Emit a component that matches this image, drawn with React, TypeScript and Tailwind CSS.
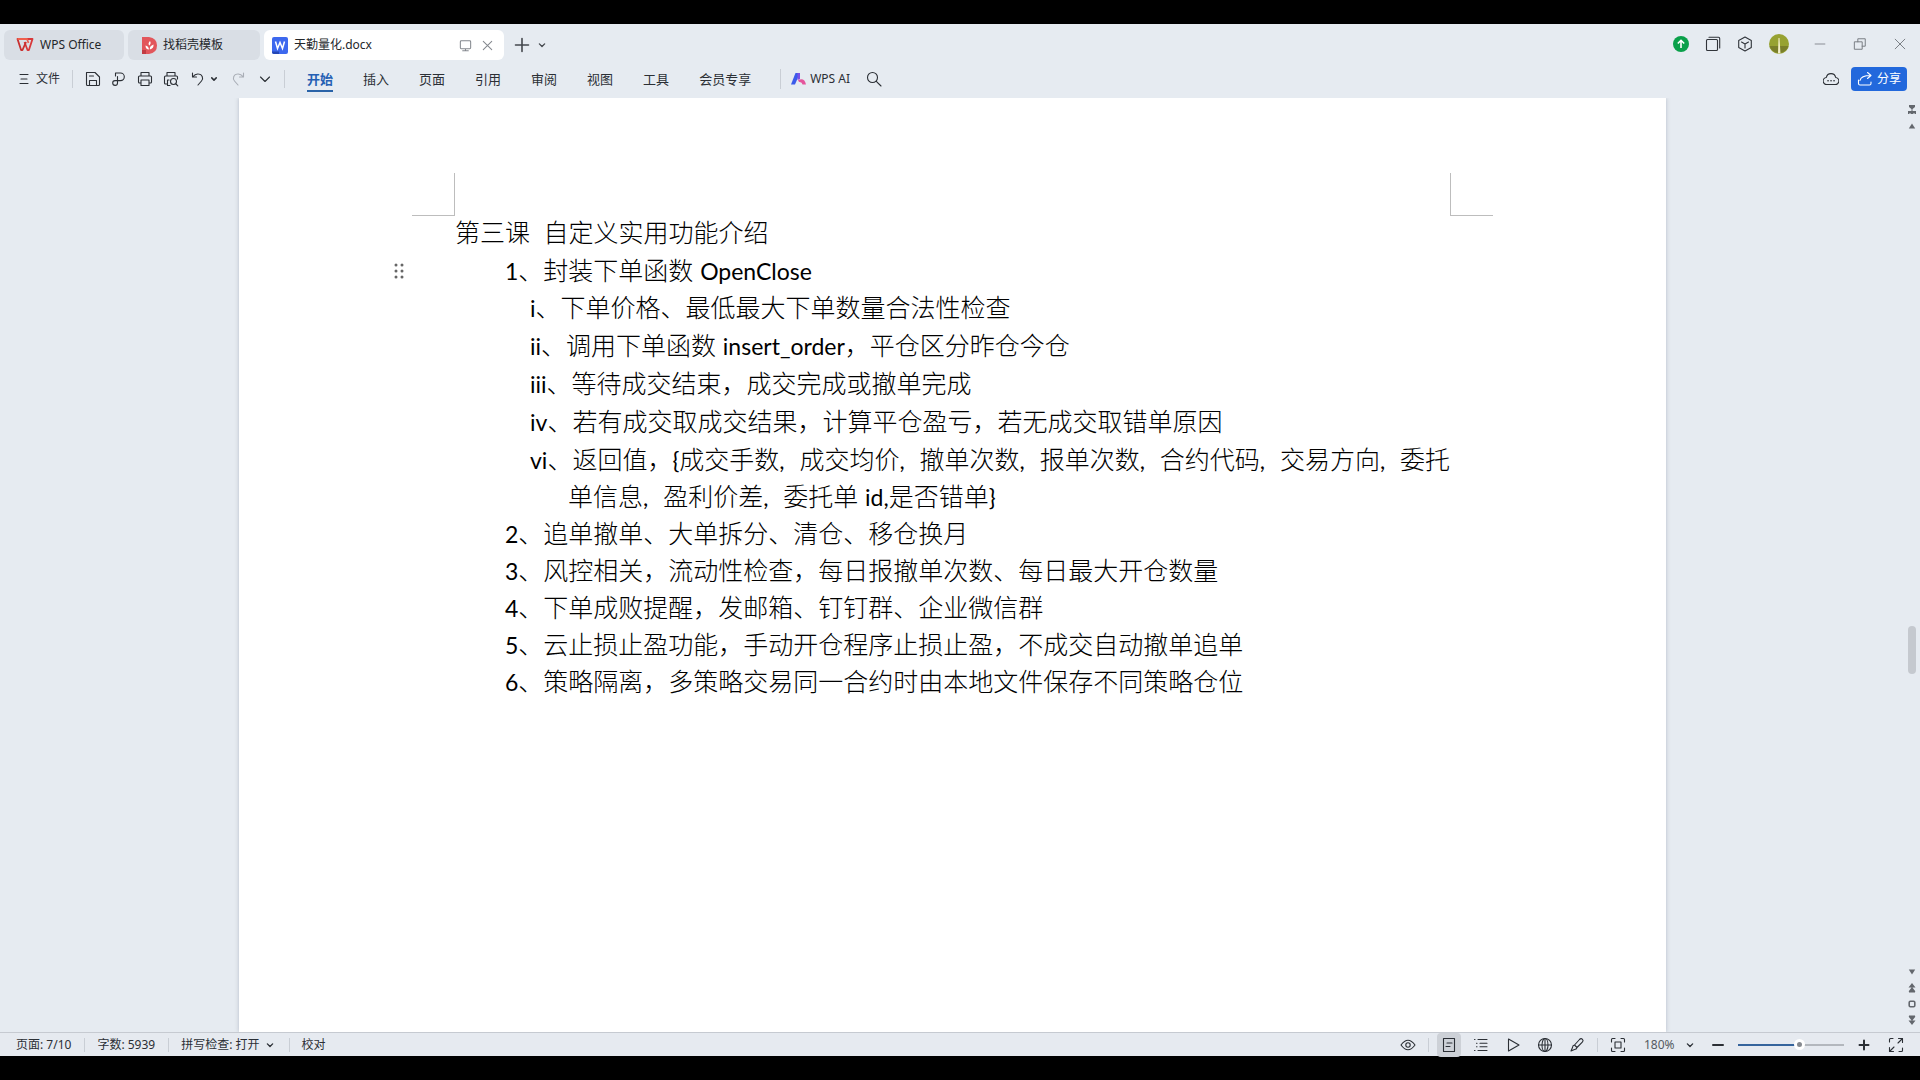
import { useState, type ReactNode } from 'react'

const menus = ['开始', '插入', '页面', '引用', '审阅', '视图', '工具', '会员专享']

function Icon({ children, className = 'size-4', strokeWidth = 1.1 }: { children: ReactNode; className?: string; strokeWidth?: number }) {
  return (
    <svg
      viewBox="0 0 16 16"
      className={`shrink-0 ${className}`}
      fill="none"
      stroke="currentColor"
      strokeWidth={strokeWidth}
      strokeLinecap="round"
      strokeLinejoin="round"
      aria-hidden="true"
    >
      {children}
    </svg>
  )
}

function Tool({ label, children, className = 'w-[26px]' }: { label: string; children: ReactNode; className?: string }) {
  return (
    <button type="button" aria-label={label} className={`flex h-6 shrink-0 items-center justify-center ${className}`}>
      {children}
    </button>
  )
}

function Divider({ className = '' }: { className?: string }) {
  return <span className={`w-px shrink-0 bg-[#c9ced5] ${className}`} />
}

function TitleBar() {
  return (
    <header className="flex h-9 items-end justify-between pl-1">
      <nav className="flex items-center gap-1 text-xs text-[#24272b]">
        <button type="button" className="flex h-[30px] w-[120px] items-center gap-1.5 rounded-md bg-[#d9dee5] pl-3">
          <svg viewBox="0 0 18 16" className="h-4 w-[18px]" fill="none" strokeWidth="1.8" strokeLinejoin="round">
            <path d="M8.5 2h8l-3.6 11h-1.4L8.500 5" stroke="#d8383a" />
            <path d="M11 2H1.500l3.600 11h1.400L10 5" stroke="#c9302f" />
            <path d="M1.500 2H11l1.500 4" stroke="#ee5f4e" />
          </svg>
          WPS Office
        </button>
        <button type="button" className="flex h-[30px] w-[132px] items-center gap-1.5 rounded-md bg-[#d9dee5] pl-3.5">
          <svg viewBox="0 0 15 17" className="h-[17px] w-[15px]">
            <path d="M0 0h7q8 1 8 8.500T7 17H0z" fill="#e2565b" />
            <path d="M0 13h4v4H0z" fill="#c23b42" />
            <path d="M3.500 8.500q3 .5 3.500 4-3.500 0-3.500-4M7.800 12.500Q7.300 9 11.500 7.500q.5 4-3.700 5M7.300 8.500Q5.500 6.500 8 4q1.500 2.500-.7 4.500" fill="#fff" />
          </svg>
          找稻壳模板
        </button>
        <div className="flex h-[30px] w-[240px] items-center rounded-md bg-white pr-1.5 pl-2">
          <svg viewBox="0 0 16 17" className="h-[17px] w-4">
            <rect width="16" height="17" rx="2" fill="#3d68ee" />
            <path d="M0 14.500h7V17H2q-2 0-2-2z" fill="#2447b5" />
            <path d="M3.500 4.500l2 7L8 5.500l2.500 6 2-7" fill="none" stroke="#fff" strokeWidth="1.500" />
          </svg>
          <span className="ml-1.5 flex-1">天勤量化.docx</span>
          <Tool label="显示" className="w-[22px] text-[#84888e]">
            <Icon className="size-[15px]">
              <path d="M3.500 3h9q1 0 1 1v6.500q0 1-1 1h-9q-1 0-1-1V4q0-1 1-1zM8 11.500v2M5 13.500h6" />
            </Icon>
          </Tool>
          <Tool label="关闭标签" className="w-[22px] text-[#84888e]">
            <Icon className="size-[15px]">
              <path d="M3.500 3.500l9 9M12.500 3.500l-9 9" />
            </Icon>
          </Tool>
        </div>
        <Tool label="新建" className="w-7 text-[#44484d]">
          <Icon strokeWidth={1.6}>
            <path d="M8 1.500v13M1.500 8h13" />
          </Icon>
        </Tool>
        <Tool label="标签列表" className="w-1 text-[#44484d]">
          <Icon className="size-3" strokeWidth={1.8}>
            <path d="M4.500 6.500L8 10l3.500-3.500" />
          </Icon>
        </Tool>
      </nav>

      <div className="flex h-8 items-center text-[#30343a]">
        <Tool label="升级" className="w-8">
          <svg viewBox="0 0 16 16" className="size-4">
            <circle cx="8" cy="8" r="8" fill="#0aa04a" />
            <path d="M8 12V4.500M4.800 7.500L8 4.300l3.200 3.200" fill="none" stroke="#fff" strokeWidth="1.600" />
          </svg>
        </Tool>
        <Tool label="窗口" className="w-8">
          <Icon>
            <path d="M2.500 3.500h9q1 0 1 1v9q0 1-1 1h-9q-1 0-1-1v-9q0-1 1-1zM4 1.300h9.500q1.200 0 1.200 1.200V12" />
          </Icon>
        </Tool>
        <Tool label="工作区" className="w-8">
          <Icon>
            <path d="M8 1l6.300 3.500v7L8 15l-6.300-3.500v-7zM4.500 6L8 8l3.500-2M8 8v4" />
          </Icon>
        </Tool>
        <Tool label="账号" className="w-9">
          <svg viewBox="0 0 20 20" className="size-5">
            <circle cx="10" cy="10" r="10" fill="#97a232" />
            <path d="M.5 12h19A10 10 0 0 1 .5 12z" fill="#7a7f2a" />
            <path d="M9.500 4h1l1 15.500H9z" fill="#f3efc8" />
          </svg>
        </Tool>
        <Tool label="最小化" className="ml-[3px] w-10 text-[#777b81]">
          <Icon className="size-3">
            <path d="M1.500 8h13" />
          </Icon>
        </Tool>
        <Tool label="还原" className="w-10 text-[#777b81]">
          <Icon className="size-3.5">
            <path d="M2 5.500h8.500V14H2zM5.500 5.500V2H14v8.500h-3.500" />
          </Icon>
        </Tool>
        <Tool label="关闭" className="w-10 text-[#777b81]">
          <Icon className="size-3.5">
            <path d="M2.500 2.500l11 11M13.500 2.500l-11 11" />
          </Icon>
        </Tool>
      </div>
    </header>
  )
}

function Ribbon() {
  const [active, setActive] = useState('开始')

  return (
    <div className="flex h-[38px] items-center justify-between pr-[13px] pl-4 text-[#2b2f35]">
      <div className="flex items-center">
        <button type="button" className="flex items-center gap-1 text-xs">
          <Icon>
            <path d="M4 3.500h8M5 8h6M4 12.500h8" />
          </Icon>
          文件
        </button>
        <Divider className="mr-[7px] ml-3 h-[18px]" />
        <Tool label="保存">
          <Icon>
            <path d="M1.500 1.500h8.500l4.500 4.500v7.500q0 1-1 1h-11q-1 0-1-1zM4.500 14.500v-5h7v5M4.500 5h4" />
          </Icon>
        </Tool>
        <Tool label="输出为PDF">
          <Icon>
            <path d="M4.500 5V2h5a3.800 3.800 0 0 1 0 7.600H4a2.400 2.400 0 1 0 2.500 2.400V5.500" />
          </Icon>
        </Tool>
        <Tool label="打印">
          <Icon>
            <path d="M4 5V1.500h8V5M4 12H2.500q-1 0-1-1V6q0-1 1-1h11q1 0 1 1v5q0 1-1 1H12M4 9h8v5.500H4z" />
          </Icon>
        </Tool>
        <Tool label="打印预览">
          <Icon>
            <path d="M4 5V1.500h8V5M4.500 13H2.500q-1 0-1-1V6q0-1 1-1h11q1 0 1 1v2M7 14.500H4.500V9H6M14.800 14.800L13 13" />
            <circle cx="10.500" cy="10.500" r="3" />
          </Icon>
        </Tool>
        <Tool label="撤销">
          <Icon>
            <path d="M3.500 2v4H7.500M3.500 6Q6.500 2.500 9.500 3a4.200 4.200 0 0 1 3 7L9 14" />
          </Icon>
        </Tool>
        <Tool label="撤销列表" className="w-2">
          <Icon className="size-3" strokeWidth={2}>
            <path d="M5 6.500l3 3 3-3" />
          </Icon>
        </Tool>
        <Tool label="恢复" className="ml-2 w-[26px] text-[#a9aeb6]">
          <Icon>
            <path d="M12.500 2v4H8.500M12.500 6Q9.500 2.500 6.500 3a4.200 4.200 0 0 0-3 7L7 14" />
          </Icon>
        </Tool>
        <Tool label="更多">
          <Icon>
            <path d="M3.500 6L8 10.500 12.500 6" />
          </Icon>
        </Tool>
        <Divider className="mr-[22px] ml-1.5 h-[18px]" />

        <nav className="flex gap-[30px] text-[13px]">
          {menus.map(m => (
            <button
              key={m}
              type="button"
              onClick={() => setActive(m)}
              className={
                m === active
                  ? 'border-b-2 border-[#2a63a8] pt-0.5 leading-[22px] font-bold text-[#2560b4]'
                  : 'border-b-2 border-transparent pt-0.5 leading-[22px]'
              }
            >
              {m}
            </button>
          ))}
        </nav>

        <Divider className="mr-2.5 ml-[29px] h-5" />
        <button type="button" className="flex items-center gap-[3px] text-xs">
          <svg viewBox="0 0 16 14" className="h-3.5 w-4">
            <path d="M0 12.500L4.500 1H9L4 12.500z" fill="#3b5bea" />
            <path d="M6.500 1H9v6l-2.500 1z" fill="#7a50e6" />
            <path d="M7 8q6.500-3 8 4.500h-3.500Q11 9.500 8 10z" fill="#e5559c" />
          </svg>
          WPS AI
        </button>
        <Tool label="搜索" className="ml-[11px] w-[26px]">
          <Icon>
            <circle cx="6.500" cy="6.500" r="5" />
            <path d="M10.300 10.300L15 15" />
          </Icon>
        </Tool>
      </div>

      <div className="flex items-center gap-3">
        <Tool label="云同步" className="w-4">
          <Icon>
            <path d="M4 13.500A3.500 3.500 0 0 1 3.300 6.500 4.800 4.800 0 0 1 12.700 6.500 3.500 3.500 0 0 1 12 13.500z" />
            <path d="M5 9.800h.1M8 9.800h.1M11 9.800h.1" strokeWidth="1.600" />
          </Icon>
        </Tool>
        <button type="button" className="flex h-6 w-14 items-center justify-center gap-1 rounded bg-[#2268dc] text-xs text-white">
          <Icon>
            <path d="M1.500 9v3.500q0 1.500 1.500 1.500h9.500q1.500 0 1.500-1.500V11M3 9.500Q4 4.500 13.500 4.500M10.500 1.500l3.500 3-3.500 3" />
          </Icon>
          分享
        </button>
      </div>
    </div>
  )
}

const returned = ['成交手数', '成交均价', '撤单次数', '报单次数', '合约代码', '交易方向']

function Latin({ children }: { children: ReactNode }) {
  return <span className="text-[23px] leading-none font-normal">{children}</span>
}

function Comma() {
  return (
    <span className="mr-[9px]">
      <Latin>, </Latin>
    </span>
  )
}

function Paper() {
  return (
    <main className="w-full max-w-[1427px] bg-white shadow-[0_0_4px_rgba(90,100,120,0.35)]">
      {/* margin corner marks */}
      <div className="flex justify-between px-[173px] pt-[75px]">
        <div className="size-[43px] border-r border-b border-[#bdbdbd]" />
        <div className="size-[43px] border-b border-l border-[#bdbdbd]" />
      </div>
      <article className="relative -mt-0.5 px-[216px] font-[Lato,'Noto_Sans_CJK_SC',sans-serif] text-[25px] leading-[37px] font-light whitespace-nowrap text-black">
        <svg viewBox="0 0 10 16" className="absolute top-[49px] left-[155px] h-4 w-2.5" fill="#666">
          <circle cx="2" cy="2" r="1.500" />
          <circle cx="8" cy="2" r="1.500" />
          <circle cx="2" cy="8" r="1.500" />
          <circle cx="8" cy="8" r="1.500" />
          <circle cx="2" cy="14" r="1.500" />
          <circle cx="8" cy="14" r="1.500" />
        </svg>
        <h1>第三课&nbsp; 自定义实用功能介绍</h1>
        <ul className="mt-px pl-[50px]">
          <li>
            <Latin>1</Latin>、封装下单函数 <Latin>OpenClose</Latin>
            <ul className="flex flex-col gap-px pl-[25px]">
              <li><Latin>i</Latin>、下单价格、最低最大下单数量合法性检查</li>
              <li><Latin>ii</Latin>、调用下单函数 <Latin>insert_order</Latin>，平仓区分昨仓今仓</li>
              <li><Latin>iii</Latin>、等待成交结束，成交完成或撤单完成</li>
              <li><Latin>iv</Latin>、若有成交取成交结果，计算平仓盈亏，若无成交取错单原因</li>
              <li className="pl-[38px] -indent-[38px]">
                <Latin>vi</Latin>、返回值，<Latin>{'{'}</Latin>
                {returned.map(r => (
                  <span key={r}>
                    {r}
                    <Comma />
                  </span>
                ))}
                委托
                <br />
                单信息
                <Comma />
                盈利价差
                <Comma />
                委托单 <Latin>id,</Latin>是否错单<Latin>{'}'}</Latin>
              </li>
            </ul>
          </li>
          <li><Latin>2</Latin>、追单撤单、大单拆分、清仓、移仓换月</li>
          <li><Latin>3</Latin>、风控相关，流动性检查，每日报撤单次数、每日最大开仓数量</li>
          <li><Latin>4</Latin>、下单成败提醒，发邮箱、钉钉群、企业微信群</li>
          <li><Latin>5</Latin>、云止损止盈功能，手动开仓程序止损止盈，不成交自动撤单追单</li>
          <li><Latin>6</Latin>、策略隔离，多策略交易同一合约时由本地文件保存不同策略仓位</li>
        </ul>
      </article>
    </main>
  )
}

function ScrollRail() {
  return (
    <aside className="flex w-[15px] shrink-0 flex-col items-center justify-between py-1 pr-0.5 text-[#63676d]">
      <div className="flex flex-col items-center">
        <Tool label="标尺" className="h-4! w-3">
          <svg viewBox="0 0 10 10" className="size-2.5" fill="currentColor">
            <path d="M2 0h6v2L5 4.500 2 2zM4.500 4h1v2h-1zM1 6h8v3H7.500V8h-1v1h-3V8h-1v1H1z" />
          </svg>
        </Tool>
        <Tool label="向上滚动" className="h-4! w-3">
          <svg viewBox="0 0 10 10" className="size-2" fill="currentColor">
            <path d="M5 2l4 6H1z" />
          </svg>
        </Tool>
      </div>
      <div className="mt-[202px] h-12 w-2 rounded-full bg-[#c5c9cf]" />
      <div className="flex flex-col items-center">
        <Tool label="向下滚动" className="h-4! w-3">
          <svg viewBox="0 0 10 10" className="size-2" fill="currentColor">
            <path d="M5 8l4-6H1z" />
          </svg>
        </Tool>
        <Tool label="上一页" className="h-4! w-3">
          <svg viewBox="0 0 10 10" className="size-2.5" fill="currentColor">
            <path d="M5 0l3.500 4.500h-7zM5 4l3.500 4.500h-7zM2 8.500h6v1H2z" />
          </svg>
        </Tool>
        <Tool label="选择浏览对象" className="h-4! w-3">
          <svg viewBox="0 0 10 10" className="size-2" fill="none" stroke="currentColor" strokeWidth="2">
            <rect x="1.500" y="1.500" width="7" height="7" rx="1.500" />
          </svg>
        </Tool>
        <Tool label="下一页" className="h-4! w-3">
          <svg viewBox="0 0 10 10" className="size-2.5" fill="currentColor">
            <path d="M5 10L1.500 5.500h7zM5 6L1.500 1.500h7zM2 .5h6v1H2z" />
          </svg>
        </Tool>
      </div>
    </aside>
  )
}

function StatusBar() {
  const [zoom, setZoom] = useState(180)

  return (
    <footer className="flex h-6 items-center justify-between border-t border-[#c6cad1] bg-[#e6eaf0] pr-3 pl-4 text-xs text-[#2b2f35]">
      <div className="flex items-center gap-3">
        <span>页面: 7/10</span>
        <Divider className="ml-px h-3.5" />
        <span>字数: 5939</span>
        <Divider className="ml-px h-3.5" />
        <button type="button" className="flex items-center gap-1">
          拼写检查: 打开
          <Icon className="size-3" strokeWidth={1.8}>
            <path d="M4.500 6.500L8 10l3.500-3.500" />
          </Icon>
        </button>
        <Divider className="ml-px h-3.5" />
        <button type="button">校对</button>
      </div>

      <div className="flex items-center">
        <Tool label="护眼模式" className="w-8">
          <Icon>
            <path d="M1 8q7-9.500 14 0-7 9.500-14 0z" />
            <circle cx="8" cy="8" r="2.200" />
          </Icon>
        </Tool>
        <Divider className="mr-2 ml-1 h-3.5" />
        <Tool label="页面视图" className="w-6 rounded bg-[#cdd1d7]">
          <Icon>
            <path d="M2.500 1.500h11v13h-11zM6 6h5M5 9.500h4" />
          </Icon>
        </Tool>
        <Tool label="大纲" className="ml-1 w-8">
          <Icon>
            <path d="M5 2.500h9M7 6.200h7M7 9.800h7M5 13.500h9M1.500 2.500h.5M3.500 6.200h.5M3.500 9.800h.5M1.500 13.500h.5" />
          </Icon>
        </Tool>
        <Tool label="阅读版式" className="w-8">
          <Icon>
            <path d="M3.500 2v12L14 8z" />
          </Icon>
        </Tool>
        <Tool label="Web版式" className="w-8">
          <Icon>
            <circle cx="8" cy="8" r="6.500" />
            <ellipse cx="8" cy="8" rx="3" ry="6.500" />
            <path d="M1.500 8h13M8 1.500v13" />
          </Icon>
        </Tool>
        <Tool label="写作模式" className="w-8">
          <Icon>
            <path d="M13.500 2.300q-1.500-1.300-3 .2L5.500 8 8 10.500l5.300-5.300q1.500-1.500.2-2.900zM5.500 8Q3.500 8.500 3.500 10.500L2 14l3.500-1.500Q7.500 12.500 8 10.500" />
          </Icon>
        </Tool>
        <Divider className="mx-1 h-3.5" />
        <Tool label="适合页面" className="w-8">
          <Icon>
            <path d="M1.500 5V2.500q0-1 1-1H5M11 1.500h2.500q1 0 1 1V5M14.500 11v2.500q0 1-1 1H11M5 14.500H2.500q-1 0-1-1V11M5 5h6v6H5z" />
          </Icon>
        </Tool>
        <div className="relative ml-2.5 flex items-center">
          <select
            aria-label="缩放比例"
            value={zoom}
            onChange={e => setZoom(Number(e.target.value))}
            className="w-14 appearance-none bg-transparent text-[#555a61]"
          >
            {Array.from(new Set([100, 150, 180, 200, zoom])).map(z => (
              <option key={z} value={z}>{z}%</option>
            ))}
          </select>
          <Icon className="pointer-events-none absolute right-1 size-3" strokeWidth={1.8}>
            <path d="M4.500 6.500L8 10l3.500-3.500" />
          </Icon>
        </div>
        <Tool label="缩小" className="ml-1.5 w-6">
          <Icon strokeWidth={2}>
            <path d="M3 8h10" />
          </Icon>
        </Tool>
        <input
          type="range"
          aria-label="缩放"
          min={10}
          max={300}
          value={zoom}
          onChange={e => setZoom(Number(e.target.value))}
          className="mx-2 h-0.5 w-[106px] appearance-none bg-[linear-gradient(to_right,#36649c_58%,#b3b7bd_58%)] [&::-webkit-slider-thumb]:size-[11px] [&::-webkit-slider-thumb]:appearance-none [&::-webkit-slider-thumb]:rounded-full [&::-webkit-slider-thumb]:border-3 [&::-webkit-slider-thumb]:border-white [&::-webkit-slider-thumb]:bg-[#85898f]"
        />
        <Tool label="放大" className="w-6">
          <Icon strokeWidth={2}>
            <path d="M8 3.500v9M3.500 8h9" />
          </Icon>
        </Tool>
        <Tool label="全屏" className="ml-2 w-6">
          <Icon>
            <path d="M10.500 1.500h4v4M14.500 1.500L10 6M5.500 14.500h-4v-4M1.500 14.500L6 10M1.500 5V2.500q0-1 1-1H5M14.500 11v2.500q0 1-1 1H11" />
          </Icon>
        </Tool>
      </div>
    </footer>
  )
}

export default function App() {
  return (
    <div className="flex min-h-screen flex-col bg-black py-6 font-['Noto_Sans','Noto_Sans_CJK_SC',sans-serif]">
      <div className="flex flex-1 flex-col bg-[#e6ebf1]">
        <TitleBar />
        <Ribbon />
        <div className="flex flex-1 overflow-hidden">
          <div className="flex flex-1 justify-center">
            <Paper />
          </div>
          <ScrollRail />
        </div>
        <StatusBar />
      </div>
    </div>
  )
}
